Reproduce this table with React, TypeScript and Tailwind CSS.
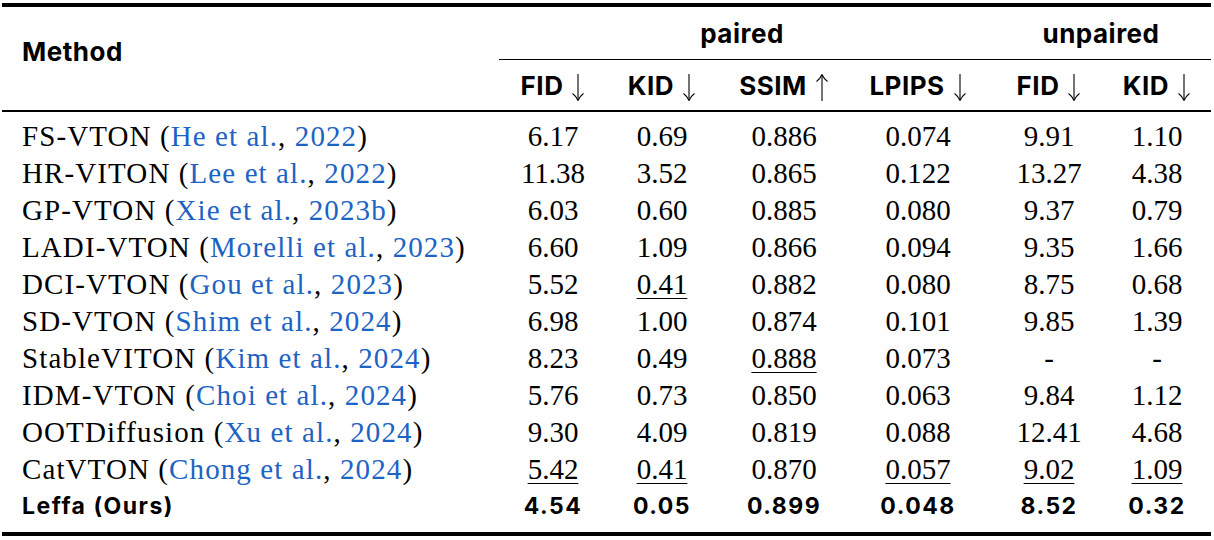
import React from 'react'

type Row = {
  name: string
  authors: string
  year: string
  values: string[]
}

// values prefixed with "_" are underlined (second best)
const rows: Row[] = [
  { name: 'FS-VTON', authors: 'He et al.', year: '2022', values: ['6.17', '0.69', '0.886', '0.074', '9.91', '1.10'] },
  { name: 'HR-VITON', authors: 'Lee et al.', year: '2022', values: ['11.38', '3.52', '0.865', '0.122', '13.27', '4.38'] },
  { name: 'GP-VTON', authors: 'Xie et al.', year: '2023b', values: ['6.03', '0.60', '0.885', '0.080', '9.37', '0.79'] },
  { name: 'LADI-VTON', authors: 'Morelli et al.', year: '2023', values: ['6.60', '1.09', '0.866', '0.094', '9.35', '1.66'] },
  { name: 'DCI-VTON', authors: 'Gou et al.', year: '2023', values: ['5.52', '_0.41', '0.882', '0.080', '8.75', '0.68'] },
  { name: 'SD-VTON', authors: 'Shim et al.', year: '2024', values: ['6.98', '1.00', '0.874', '0.101', '9.85', '1.39'] },
  { name: 'StableVITON', authors: 'Kim et al.', year: '2024', values: ['8.23', '0.49', '_0.888', '0.073', '-', '-'] },
  { name: 'IDM-VTON', authors: 'Choi et al.', year: '2024', values: ['5.76', '0.73', '0.850', '0.063', '9.84', '1.12'] },
  { name: 'OOTDiffusion', authors: 'Xu et al.', year: '2024', values: ['9.30', '4.09', '0.819', '0.088', '12.41', '4.68'] },
  { name: 'CatVTON', authors: 'Chong et al.', year: '2024', values: ['_5.42', '_0.41', '0.870', '_0.057', '_9.02', '_1.09'] },
]

const ours = ['4.54', '0.05', '0.899', '0.048', '8.52', '0.32']

const colWidths = ['w-[108px]', 'w-[110px]', 'w-[134px]', 'w-[134px]', 'w-[128px]', 'w-[88px]']

function Arrow({ up = false }: { up?: boolean }) {
  return (
    <svg
      width="14"
      height="27"
      viewBox="0 0 14 27"
      className="inline-block ml-[8px] align-[-6px]"
      fill="none"
      stroke="black"
      strokeWidth="1.1"
    >
      {up ? (
        <>
          <path d="M7 27V1" />
          <path d="M1.5 7.5Q5 5 7 0.5Q9 5 12.5 7.5" />
        </>
      ) : (
        <>
          <path d="M7 0V26" />
          <path d="M1.5 19.5Q5 22 7 26.5Q9 22 12.5 19.5" />
        </>
      )}
    </svg>
  )
}

function Value({ v }: { v: string }) {
  if (v.startsWith('_')) {
    return <span className="underline decoration-1 underline-offset-[4px]">{v.slice(1)}</span>
  }
  return <span>{v}</span>
}

export default function App() {
  const headers = [
    { label: 'FID' },
    { label: 'KID' },
    { label: 'SSIM', up: true },
    { label: 'LPIPS' },
    { label: 'FID' },
    { label: 'KID' },
  ]

  return (
    <div className="w-[1214px] h-[540px] bg-white text-black overflow-hidden">
      <div className="ml-[2px] w-[1209px] pt-[3px]">
        {/* top rule */}
        <div className="h-[4px] bg-black" />

        {/* header */}
        <div className="flex font-['Inter',sans-serif] font-bold text-[26px] tracking-[0.5px]">
          <div className="w-[497px] pl-[20px] pt-[32px] leading-[26px]">Method</div>
          <div className="flex-1 flex flex-col">
            <div className="flex h-[52px] items-center pr-[10px]">
              <div className="w-[486px] text-center">paired</div>
              <div className="w-[216px] pl-[16px] text-center">unpaired</div>
            </div>
            <div className="h-px bg-black" />
            <div className="flex h-[50px] items-center pr-[10px]">
              {headers.map((h, i) => (
                <div key={i} className={`${colWidths[i]} text-center whitespace-nowrap`}>
                  {h.label}
                  <Arrow up={h.up} />
                </div>
              ))}
            </div>
          </div>
        </div>
        <div className="h-[1.5px] bg-black" />

        {/* body */}
        <div className="pt-[6px]">
          {rows.map((r) => (
            <div key={r.name} className="flex h-[37px] leading-[37px] font-['Liberation_Serif',serif] text-[29px]">
              <div className="w-[497px] pl-[20px] tracking-[1.1px] whitespace-nowrap">
                {r.name} (<span className="text-[#1d63c4]">{r.authors}</span>,{' '}
                <span className="text-[#1d63c4]">{r.year}</span>)
              </div>
              {r.values.map((v, i) => (
                <div key={i} className={`${colWidths[i]} text-center`}>
                  <Value v={v} />
                </div>
              ))}
            </div>
          ))}
          <div className="flex h-[37px] leading-[37px] font-['Inter',sans-serif] font-bold text-[23px] tracking-[1.5px]">
            <div className="w-[497px] pl-[20px]">Leffa (Ours)</div>
            {ours.map((v, i) => (
              <div key={i} className={`${colWidths[i]} text-center`}>
                {v}
              </div>
            ))}
          </div>
        </div>

        {/* bottom rule */}
        <div className="mt-[7px] h-[4px] bg-black" />
      </div>
    </div>
  )
}
